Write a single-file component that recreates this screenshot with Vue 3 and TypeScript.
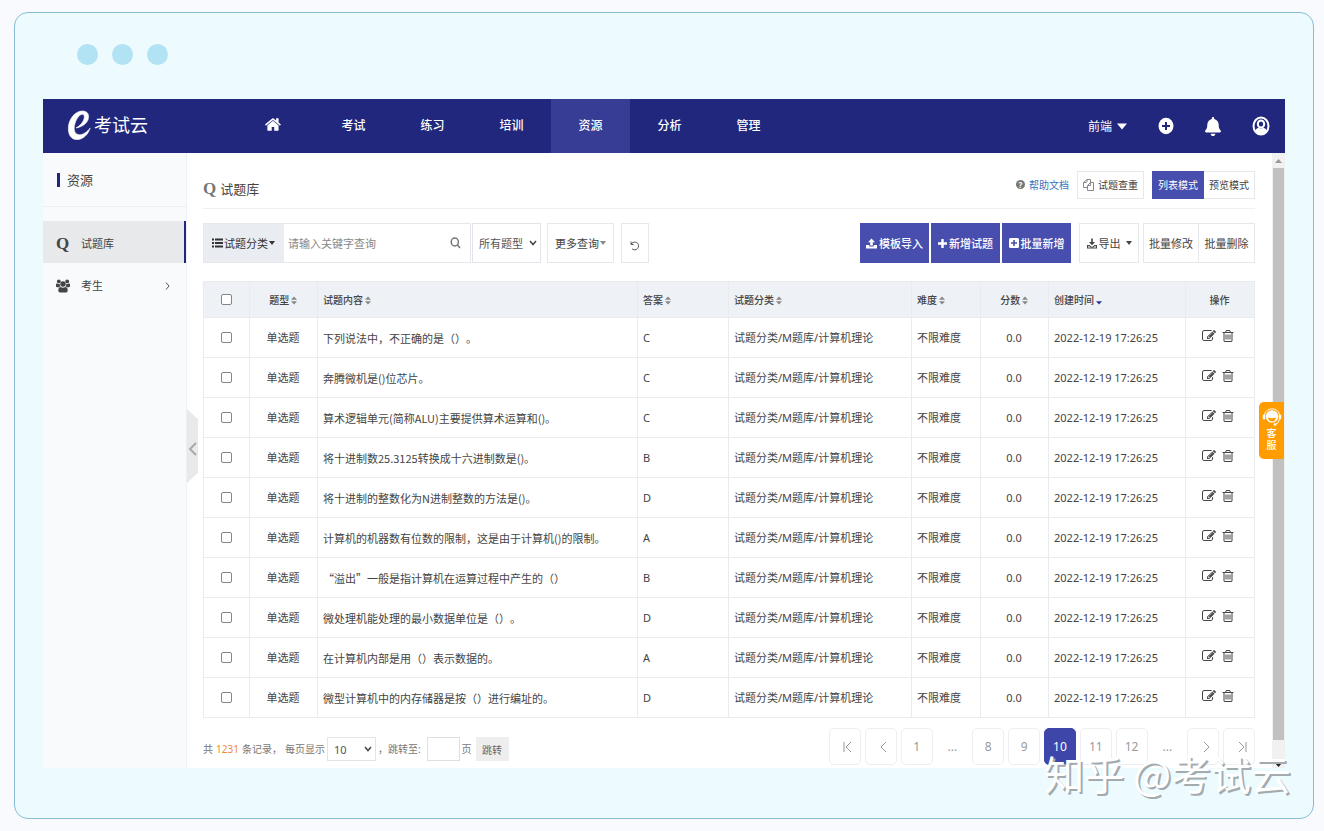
<script setup lang="ts">
import { ref } from 'vue'

interface Question {
  id: number
  text: string
  answer: string
}

interface Column {
  label: string
  cls: string
  sort: 'both' | 'desc' | 'none'
}

const navItems: string[] = ['考试', '练习', '培训', '资源', '分析', '管理']
const activeNav = ref('资源')

const columns: Column[] = [
  { label: '题型', cls: 'center', sort: 'both' },
  { label: '试题内容', cls: '', sort: 'both' },
  { label: '答案', cls: '', sort: 'both' },
  { label: '试题分类', cls: '', sort: 'both' },
  { label: '难度', cls: '', sort: 'both' },
  { label: '分数', cls: 'center', sort: 'both' },
  { label: '创建时间', cls: '', sort: 'desc' },
  { label: '操作', cls: 'center', sort: 'none' },
]

const questions: Question[] = [
  { id: 1, text: '下列说法中，不正确的是（）。', answer: 'C' },
  { id: 2, text: '奔腾微机是()位芯片。', answer: 'C' },
  { id: 3, text: '算术逻辑单元(简称ALU)主要提供算术运算和()。', answer: 'C' },
  { id: 4, text: '将十进制数25.3125转换成十六进制数是()。', answer: 'B' },
  { id: 5, text: '将十进制的整数化为N进制整数的方法是()。', answer: 'D' },
  { id: 6, text: '计算机的机器数有位数的限制，这是由于计算机()的限制。', answer: 'A' },
  { id: 7, text: '“溢出”一般是指计算机在运算过程中产生的（）', answer: 'B' },
  { id: 8, text: '微处理机能处理的最小数据单位是（）。', answer: 'D' },
  { id: 9, text: '在计算机内部是用（）表示数据的。', answer: 'A' },
  { id: 10, text: '微型计算机中的内存储器是按（）进行编址的。', answer: 'D' },
]

const pages: string[] = ['first', 'prev', '1', '...', '8', '9', '10', '11', '12', '...', 'next', 'last']
const arrows: Record<string, { d: string; label: string }> = {
  first: { d: 'M2 1v10M9 1L4 6l5 5', label: '首页' },
  prev: { d: 'M8 1L3 6l5 5', label: '上一页' },
  next: { d: 'M4 1l5 5-5 5', label: '下一页' },
  last: { d: 'M10 1v10M3 1l5 5-5 5', label: '末页' },
}
const currentPage = ref('10')
const keyword = ref('')
const jumpTo = ref('')
</script>

<template>
  <div class="frame">
    <div class="dots"><i></i><i></i><i></i></div>

    <div class="app">
      <header class="topbar">
        <a class="logo" href="#">
          <svg class="logo-mark" viewBox="0 0 24 32" aria-hidden="true">
            <path
              d="M9 18.500C14 18 20 14.500 21.500 9.500C23 4.500 20.500 1 15.500 1C8 1 1 9.500 1 19C1 26.500 4.500 30.500 10 30.500C16 30.500 21.500 25.500 23.500 18.500C20.500 22.500 16.500 25.500 12.500 25.500C8.500 25.500 6.500 22 7.200 17C8.200 10.500 12 4.500 15.500 4.500C18.500 4.500 18 10 14.500 14C12.800 16 11 17.500 9 18.500Z"
            />
          </svg>
          <span>考试云</span>
        </a>
        <nav class="nav">
          <a href="#" aria-label="首页">
            <svg class="home" viewBox="80 200 1640 1290" aria-hidden="true">
              <path d="M1472 992v480q0 26-19 45t-45 19h-384v-384h-256v384h-384q-26 0-45-19t-19-45v-480q0-1 .5-3t.5-3l575-474 575 474q1 2 1 6zm223-69l-62 74q-8 9-21 11h-3q-13 0-21-7l-692-577-692 577q-12 8-24 7-13-2-21-11l-62-74q-8-10-7-23.500t11-21.500l719-599q32-26 76-26t76 26l244 204v-195q0-14 9-23t23-9h192q14 0 23 9t9 23v408l219 182q10 8 11 21.500t-7 23.500z" />
            </svg>
          </a>
          <a v-for="n in navItems" :key="n" href="#" :class="{ active: n === activeNav }" @click.prevent="activeNav = n">{{ n }}</a>
        </nav>
        <div class="top-actions">
          <button class="switcher" type="button">
            前端
            <svg width="10" height="7" viewBox="0 0 10 7" aria-hidden="true"><path d="M0 0.500h10L5 6.500z" /></svg>
          </button>
          <button type="button" aria-label="新增">
            <svg width="16" height="18" viewBox="0 0 16 18" aria-hidden="true">
              <ellipse cx="8" cy="9" rx="7.500" ry="8.300" />
              <path class="cut" d="M8 5v8M4 9h8" />
            </svg>
          </button>
          <button type="button" aria-label="消息">
            <svg width="16" height="19" viewBox="0 0 448 512" preserveAspectRatio="none" aria-hidden="true">
              <path d="M224 512c35.320 0 63.970-28.650 63.970-64H160.030c0 35.350 28.650 64 63.970 64zm215.390-149.710c-19.320-20.760-55.470-51.990-55.470-154.290 0-77.700-54.480-139.900-127.940-155.160V32c0-17.670-14.320-32-31.980-32s-31.980 14.330-31.980 32v20.840C118.560 68.100 64.080 130.300 64.080 208c0 102.300-36.150 133.530-55.470 154.290-6 6.450-8.660 14.160-8.610 21.710.11 16.400 12.980 32 32.100 32h383.800c19.120 0 32-15.600 32.100-32 .05-7.550-2.610-15.270-8.610-21.710z" />
            </svg>
          </button>
          <button type="button" aria-label="个人中心">
            <svg width="18" height="20" viewBox="0 0 18 20" aria-hidden="true">
              <ellipse class="ring" cx="9" cy="10" rx="7.500" ry="8.500" />
              <ellipse class="ring" cx="9" cy="8" rx="3.200" ry="3.600" />
              <path d="M3 15C4 13 5 12.300 6.500 11.800C8 12.800 10 12.800 11.500 11.800C13 12.300 14 13 15 15C13 17.800 11 18.800 9 18.800S5 17.800 3 15z" />
            </svg>
          </button>
        </div>
      </header>

      <div class="body">
        <aside class="sidebar">
          <h2>资源</h2>
          <a class="side-item active" href="#"><b class="q">Q</b><span>试题库</span></a>
          <a class="side-item" href="#">
            <svg class="users" viewBox="0 0 14 14" aria-hidden="true">
              <circle cx="2.800" cy="2.400" r="1.900" />
              <circle cx="11.200" cy="2.400" r="1.900" />
              <circle cx="7" cy="5" r="2.700" />
              <path d="M0 5.500Q0 4.200 1.200 4.500Q2.500 5.300 3.700 4.700Q3.500 6.500 4.500 7.500Q3.500 7.600 2.800 8.300H1.200Q0 8.300 0 7.200zM14 5.500Q14 4.200 12.800 4.500Q11.500 5.300 10.300 4.700Q10.500 6.500 9.500 7.500Q10.500 7.600 11.200 8.300H12.800Q14 8.300 14 7.200z" />
              <path d="M2.300 11.500Q2.300 8 4.600 8Q7 9.500 9.400 8Q11.700 8 11.700 11.500Q11.700 13.600 10 13.600H4Q2.300 13.600 2.300 11.500z" />
            </svg>
            <span>考生</span>
            <svg class="chev" width="5" height="8" viewBox="0 0 5 8" aria-hidden="true"><path d="M1 0.500L4 4L1 7.500" /></svg>
          </a>
        </aside>

        <main class="main">
          <button class="collapse" type="button" aria-label="收起菜单">
            <svg width="8" height="14" viewBox="0 0 8 14" aria-hidden="true"><path d="M7 1L1 7l6 6" /></svg>
          </button>

          <div class="page-head">
            <h1><b class="q">Q</b>试题库</h1>
            <div class="head-tools">
              <a class="help" href="#"><i>?</i>帮助文档</a>
              <button class="btn small check" type="button">
                <svg width="11" height="12" viewBox="0 0 11 12" aria-hidden="true">
                  <path d="M4 3V0.500H7.500V4M4 0.500L0.500 3.500V8.500H4M0.500 3.500H3.500M7.500 3.500H10.500V11.500H4.500V6.500L7.500 3.500V6.500H4.500" />
                </svg>
                试题查重
              </button>
              <div class="group">
                <button class="btn small primary" type="button">列表模式</button>
                <button class="btn small" type="button">预览模式</button>
              </div>
            </div>
          </div>

          <div class="toolbar">
            <div class="search">
              <button class="category" type="button">
                <svg width="11" height="10" viewBox="0 0 11 10" aria-hidden="true">
                  <path d="M0 0.500h2v2H0zM3 0.500h8v2H3zM0 4h2v2H0zM3 4h8v2H3zM0 7.500h2v2H0zM3 7.500h8v2H3z" />
                </svg>
                <span>试题分类</span>
                <svg width="6" height="4" viewBox="0 0 6 4" aria-hidden="true"><path d="M0 0h6L3 4z" /></svg>
              </button>
              <input v-model="keyword" type="text" placeholder="请输入关键字查询" aria-label="关键字" />
              <button class="find" type="button" aria-label="查询">
                <svg width="11" height="12" viewBox="0 0 11 12" aria-hidden="true">
                  <ellipse cx="4.800" cy="5" rx="3.600" ry="4" /><path d="M7.500 8L10 11" />
                </svg>
              </button>
            </div>
            <div class="select type-select">
              <select aria-label="题型"><option>所有题型</option></select>
              <svg width="8" height="6" viewBox="0 0 8 6" aria-hidden="true"><path d="M1 1l3 3.500L7 1" /></svg>
            </div>
            <button class="btn more" type="button">
              更多查询<svg width="6" height="4" viewBox="0 0 6 4" aria-hidden="true"><path d="M0 0h6L3 4z" /></svg>
            </button>
            <button class="btn reset" type="button" aria-label="重置">
              <svg width="10" height="11" viewBox="0 0 10 11" aria-hidden="true">
                <path d="M1 1.500V4.500H3.500M1.200 4C3 1.200 8.500 1.300 8.500 5.800C8.500 10 4 10.800 2.200 8.800" />
              </svg>
            </button>

            <div class="tool-right">
              <button class="btn primary" type="button">
                <svg width="11" height="11" viewBox="0 0 11 11" aria-hidden="true">
                  <path d="M5.500 0.500L9 4.200H6.800V7.500H4.200V4.200H2zM0 7H3.300V8.500H7.700V7H11V10.500H0z" />
                </svg>模板导入
              </button>
              <button class="btn primary" type="button">
                <svg width="9" height="9" viewBox="0 0 9 9" aria-hidden="true"><path d="M3.300 0h2.400v3.300H9v2.400H5.700V9H3.300V5.700H0V3.300h3.300z" /></svg>新增试题
              </button>
              <button class="btn primary" type="button">
                <svg width="10" height="10" viewBox="0 0 10 10" aria-hidden="true">
                  <path fill-rule="evenodd" d="M1.500 0h7Q10 0 10 1.500v7Q10 10 8.500 10h-7Q0 10 0 8.500v-7Q0 0 1.500 0zM4.200 2v2.200H2v1.600h2.200V8h1.600V5.800H8V4.200H5.800V2z" />
                </svg>批量新增
              </button>
              <button class="btn export" type="button">
                <svg width="10" height="11" viewBox="0 0 10 11" aria-hidden="true">
                  <path fill-rule="evenodd" d="M4.200 0.500H5.800V4H8L5 7.200L2 4H4.200zM0 7H2.500L5 9L7.500 7H10V10.500H0zM1 8.200V9.500H9V8.200H7.800L5 10L2.200 8.200z" />
                </svg>导出<svg class="caret" width="6" height="4" viewBox="0 0 6 4" aria-hidden="true"><path d="M0 0h6L3 4z" /></svg>
              </button>
              <div class="group">
                <button class="btn" type="button">批量修改</button>
                <button class="btn" type="button">批量删除</button>
              </div>
            </div>
          </div>

          <table>
            <colgroup>
              <col class="c-check" /><col class="c-type" /><col /><col class="c-answer" /><col class="c-cat" />
              <col class="c-level" /><col class="c-score" /><col class="c-time" /><col class="c-ops" />
            </colgroup>
            <thead>
              <tr>
                <th class="center"><input type="checkbox" aria-label="全选" /></th>
                <th v-for="c in columns" :key="c.label" :class="c.cls">
                  {{ c.label }}
                  <svg v-if="c.sort === 'both'" width="6" height="9" viewBox="0 0 6 9" aria-hidden="true"><path d="M0 3.800h6L3 0.500zM0 5.200h6L3 8.500z" /></svg>
                  <svg v-if="c.sort === 'desc'" class="desc" width="6" height="9" viewBox="0 0 6 9" aria-hidden="true"><path d="M0 5.200h6L3 8.500z" /></svg>
                </th>
              </tr>
            </thead>
            <tbody>
              <tr v-for="q in questions" :key="q.id">
                <td class="center"><input type="checkbox" :aria-label="'选择第' + q.id + '题'" /></td>
                <td class="center">单选题</td>
                <td class="content">{{ q.text }}</td>
                <td>{{ q.answer }}</td>
                <td>试题分类/M题库/计算机理论</td>
                <td>不限难度</td>
                <td class="center">0.0</td>
                <td>2022-12-19 17:26:25</td>
                <td>
                  <div class="ops">
                    <button type="button" aria-label="编辑">
                      <svg width="14" height="14" viewBox="0 0 1792 1792" aria-hidden="true">
                        <path d="M888 1184l116-116-152-152-116 116v56h96v96h56zm440-720q-16-16-33 1l-350 350q-17 17-1 33t33-1l350-350q17-17 1-33zm80 594v190q0 119-84.500 203.500t-203.500 84.500h-832q-119 0-203.500-84.500t-84.500-203.500v-832q0-119 84.500-203.500t203.500-84.500h832q63 0 117 25 15 7 18 23 3 17-9 29l-49 49q-14 14-32 8-23-6-45-6h-832q-66 0-113 47t-47 113v832q0 66 47 113t113 47h832q66 0 113-47t47-113v-126q0-13 9-22l64-64q15-15 35-7t20 29zm-96-738l288 288-672 672h-288v-288zm444 132l-92 92-288-288 92-92q28-28 68-28t68 28l152 152q28 28 28 68t-28 68z" />
                      </svg>
                    </button>
                    <button type="button" aria-label="删除">
                      <svg width="14" height="14" viewBox="0 0 1792 1792" aria-hidden="true">
                        <path d="M704 736v576q0 14-9 23t-23 9h-64q-14 0-23-9t-9-23v-576q0-14 9-23t23-9h64q14 0 23 9t9 23zm256 0v576q0 14-9 23t-23 9h-64q-14 0-23-9t-9-23v-576q0-14 9-23t23-9h64q14 0 23 9t9 23zm256 0v576q0 14-9 23t-23 9h-64q-14 0-23-9t-9-23v-576q0-14 9-23t23-9h64q14 0 23 9t9 23zm128 724v-948h-896v948q0 22 7 40.500t14.500 27 10.500 8.500h832q3 0 10.500-8.500t14.500-27 7-40.500zm-672-1076h448l-48-117q-7-9-17-11h-317q-10 2-17 11zm928 32v64q0 14-9 23t-23 9h-96v948q0 83-47 143.500t-113 60.500h-832q-66 0-113-58.500t-47-141.500v-952h-96q-14 0-23-9t-9-23v-64q0-14 9-23t23-9h309l70-167q15-37 54-63t79-26h320q40 0 79 26t54 63l70 167h309q14 0 23 9t9 23z" />
                      </svg>
                    </button>
                  </div>
                </td>
              </tr>
            </tbody>
          </table>

          <footer class="footer">
            <div class="summary">
              <span>共</span><em>1231</em><span>条记录，</span>
              <label class="per" for="page-size">每页显示</label>
              <div class="select size-select">
                <select id="page-size"><option>10</option></select>
                <svg width="8" height="6" viewBox="0 0 8 6" aria-hidden="true"><path d="M1 1l3 3.500L7 1" /></svg>
              </div>
              <label class="jump" for="jump">，跳转至:</label>
              <input id="jump" v-model="jumpTo" type="text" />
              <span>页</span>
              <button class="go" type="button">跳转</button>
            </div>
            <nav class="pager" aria-label="分页">
              <template v-for="(p, i) in pages" :key="i">
                <span v-if="p === '...'">...</span>
                <button v-else-if="arrows[p]" type="button" class="arrow" :aria-label="arrows[p].label">
                  <svg width="12" height="12" viewBox="0 0 12 12" aria-hidden="true"><path :d="arrows[p].d" /></svg>
                </button>
                <button v-else type="button" :class="{ current: p === currentPage }" @click="currentPage = p">{{ p }}</button>
              </template>
            </nav>
          </footer>
        </main>

        <div class="scrollbar" aria-hidden="true">
          <svg width="7" height="4" viewBox="0 0 7 4"><path d="M0 4h7L3.500 0z" /></svg>
          <div class="thumb"></div>
          <svg class="down" width="7" height="4" viewBox="0 0 7 4"><path d="M0 0h7L3.500 4z" /></svg>
        </div>

        <button class="service" type="button">
          <svg width="20" height="20" viewBox="0 0 20 20" aria-hidden="true">
            <path class="band" d="M2.500 9C2.500 -0.500 17.500 -0.500 17.500 9" />
            <rect x="0.800" y="7.500" width="2.400" height="5" rx="1" />
            <rect x="16.800" y="7.500" width="2.400" height="5" rx="1" />
            <circle cx="10" cy="9.500" r="6.200" />
            <path class="band" d="M17.500 12Q17 16 13.500 17.500" />
            <circle cx="13" cy="17.500" r="1.300" />
            <path class="smile" d="M6 10.500Q10 12 14 10.500Q13.500 14.500 10 14.500Q6.500 14.500 6 10.500z" />
          </svg>
          <span>客</span><span>服</span>
        </button>
      </div>
    </div>

    <div class="watermark">知乎 @考试云</div>
  </div>
</template>

<style>
body {
  margin: 0;
  background: #f8fafd;
}
</style>

<style scoped>
.frame,
.frame button,
.frame input,
.frame select {
  font-family: 'Noto Sans', 'Noto Sans CJK SC', sans-serif;
}
.frame * {
  box-sizing: border-box;
}
.frame {
  position: relative;
  margin: 12px 10px 11px 14px;
  padding: 0 28px 50px;
  border: 1px solid #86bdd3;
  border-radius: 14px;
  background: #edfbff;
  color: #444;
  font-size: 11px;
  line-height: 16px;
}
button {
  padding: 0;
  border: 0;
  background: none;
  color: inherit;
  cursor: pointer;
  white-space: nowrap;
}
a {
  color: inherit;
  text-decoration: none;
}
svg {
  display: block;
  flex: none;
  fill: currentColor;
}
.dots {
  display: flex;
  gap: 14px;
  height: 86px;
  padding: 31px 0 0 34px;
}
.dots i {
  width: 21px;
  height: 21px;
  border-radius: 50%;
  background: #b1e3f4;
}

/* top bar */
.topbar {
  display: flex;
  height: 54px;
  background: #20277c;
  color: #fff;
}
.logo {
  display: flex;
  align-items: center;
  gap: 3px;
  width: 192px;
  padding: 0 0 2px 24px;
  font-size: 18px;
  line-height: 24px;
}
.logo-mark {
  width: 24px;
  height: 31px;
  overflow: visible;
  stroke: #fff;
  stroke-width: 0.600;
}
.nav {
  display: flex;
  flex: 1;
}
.nav a {
  display: flex;
  align-items: center;
  justify-content: center;
  width: 79px;
  font-size: 12px;
  font-weight: 500;
}
.nav a.active {
  background: #373c95;
}
.home {
  width: 16px;
  height: 14px;
  margin: 0 3px 4px 0;
  overflow: visible;
}
.top-actions {
  display: flex;
  align-items: center;
  gap: 31px;
  padding-right: 15px;
}
.switcher {
  display: flex;
  align-items: center;
  gap: 5px;
  font-size: 12px;
}
.cut {
  fill: none;
  stroke: #20277c;
  stroke-width: 2;
}
.ring {
  fill: none;
  stroke: #fff;
  stroke-width: 2;
}

/* body */
.body {
  position: relative;
  display: flex;
  background: #fff;
}
.sidebar {
  width: 144px;
  border-right: 1px solid #eef0f4;
  background: #f9fafc;
}
.sidebar h2 {
  display: flex;
  align-items: center;
  gap: 7px;
  height: 54px;
  margin: 0 0 14px;
  padding-left: 14px;
  border-bottom: 1px solid #eceef2;
  font-size: 13px;
  font-weight: 400;
}
.sidebar h2::before {
  content: '';
  width: 3px;
  height: 14px;
  background: #20277c;
}
.side-item {
  display: flex;
  align-items: center;
  height: 42px;
  padding: 4px 16px 0 13px;
}
.side-item.active {
  border-right: 2px solid #20277c;
  background: #e8e9eb;
}
.side-item span {
  flex: 1;
}
.q {
  font-family: 'Liberation Serif', serif;
  font-size: 17px;
}
.side-item .q {
  width: 25px;
}
.users {
  width: 14px;
  height: 14px;
  margin-right: 11px;
}
.chev {
  fill: none;
  stroke: #555;
}
.main {
  position: relative;
  flex: 1;
  min-width: 0;
  padding: 0 17px 0 16px;
}
.collapse {
  position: absolute;
  left: 0;
  top: 256px;
  display: flex;
  align-items: center;
  justify-content: center;
  width: 11px;
  height: 74px;
  padding-top: 6px;
  background: #e9e9e9;
  clip-path: polygon(0 0, 100% 14%, 100% 86%, 0 100%);
}
.collapse svg {
  fill: none;
  stroke: #aaa;
  stroke-width: 2;
}
.page-head {
  display: flex;
  align-items: center;
  justify-content: space-between;
  height: 56px;
  padding-top: 8px;
  border-bottom: 1px solid #eef0f3;
}
h1 {
  display: flex;
  align-items: center;
  gap: 4px;
  margin: 8px 0 0;
  font-size: 13px;
  font-weight: 400;
}
h1 .q {
  color: #777;
}
.head-tools,
.group,
.tool-right,
.summary {
  display: flex;
  align-items: center;
}
.head-tools {
  gap: 8px;
}
.help {
  display: flex;
  align-items: center;
  gap: 4px;
  color: #3a70bd;
  font-size: 10px;
}
.help i {
  width: 9px;
  height: 9px;
  border-radius: 50%;
  background: #777;
  color: #fff;
  font-size: 8px;
  font-style: normal;
  font-weight: 700;
  line-height: 9px;
  text-align: center;
}
.btn {
  display: flex;
  align-items: center;
  justify-content: center;
  height: 40px;
  padding: 0 5px;
  border: 1px solid #e6e8ec;
  background: #fff;
  font-size: 11px;
}
.btn.small {
  height: 28px;
  font-size: 10px;
}
.btn.primary {
  border-color: #474eae;
  background: #474eae;
  color: #fff;
}
.check {
  gap: 4px;
}
.check svg {
  fill: none;
  stroke: #888;
}
.group .btn + .btn {
  border-left: 0;
}
.toolbar {
  display: flex;
  margin: 14px 0 18px;
}
.search {
  display: flex;
  width: 268px;
  height: 40px;
  border: 1px solid #e6e8ec;
}
.category {
  display: flex;
  align-items: center;
  gap: 1px;
  width: 80px;
  padding-left: 8px;
  background: #e9edf2;
  color: #333;
  font-size: 11px;
}
.search input {
  flex: 1;
  min-width: 0;
  padding: 0 4px;
  border: 0;
  outline: 0;
  font-size: 11px;
}
.search input::placeholder {
  color: #888;
}
.find {
  width: 20px;
}
.find svg {
  fill: none;
  stroke: #777;
  stroke-width: 1.500;
}
.select {
  position: relative;
  display: flex;
  align-items: center;
}
.select select {
  appearance: none;
  width: 100%;
  height: 100%;
  border: 1px solid #e1e4e8;
  border-radius: 0;
  background: #fff;
  color: #555;
}
.select svg {
  position: absolute;
  right: 4px;
  fill: none;
  stroke: #444;
  stroke-width: 1.500;
  pointer-events: none;
}
.type-select {
  width: 69px;
  height: 40px;
  margin: 0 6px 0 1px;
}
.type-select select {
  padding: 0 6px;
  font-size: 11px;
}
.more {
  width: 67px;
  margin-right: 7px;
}
.more svg {
  margin-left: 1px;
  fill: #888;
}
.reset {
  width: 28px;
  padding-top: 4px;
}
.reset svg {
  fill: none;
  stroke: #555;
}
.tool-right {
  gap: 2px;
  margin-left: auto;
}
.tool-right .primary {
  gap: 2px;
  width: 69px;
  font-weight: 500;
}
.export {
  gap: 2px;
  width: 60px;
  margin: 0 2px 0 6px;
}
.export .caret {
  margin-left: 3px;
}
.tool-right .group .btn {
  width: 56px;
}

/* table */
table {
  width: 100%;
  border-collapse: collapse;
  table-layout: fixed;
}
.c-check {
  width: 46px;
}
.c-type {
  width: 68px;
}
.c-answer {
  width: 91px;
}
.c-cat {
  width: 183px;
}
.c-level,
.c-ops {
  width: 69px;
}
.c-score {
  width: 68px;
}
.c-time {
  width: 137px;
}
th,
td {
  height: 40px;
  padding: 0 6px 0 5px;
  border: 1px solid #e9ebee;
  text-align: left;
  white-space: nowrap;
}
th {
  height: 36px;
  background: #eef1f5;
  font-size: 10px;
  font-weight: 500;
}
th svg {
  display: inline-block;
  margin-left: -1px;
  vertical-align: -1px;
  fill: #888;
}
th .desc {
  fill: #20359c;
}
.center {
  text-align: center;
}
td.content {
  font-family: 'Noto Sans CJK SC', sans-serif;
  text-spacing-trim: space-all;
}
input[type='checkbox'] {
  appearance: none;
  display: block;
  width: 11px;
  height: 11px;
  margin: 0 auto;
  border: 1px solid #858585;
  border-radius: 2px;
  background: #fff;
}
.ops {
  display: flex;
  justify-content: center;
  gap: 5px;
  padding: 0 2px 4px 0;
}

/* footer */
.footer {
  display: flex;
  align-items: flex-start;
  justify-content: space-between;
  padding: 10px 0 3px;
  color: #777;
}
.summary {
  gap: 2px;
  padding-top: 9px;
  font-size: 10px;
}
.summary em {
  margin: 0 1px;
  color: #ee8a35;
  font-style: normal;
}
.per {
  margin-left: 1px;
}
.size-select {
  width: 49px;
  height: 24px;
}
.size-select select {
  padding: 0 6px;
  font-size: 11px;
}
.jump {
  margin-right: 4px;
}
.summary input {
  width: 33px;
  height: 24px;
  border: 1px solid #dddfe2;
}
.go {
  width: 33px;
  height: 24px;
  margin-left: 2px;
  background: #eee;
  color: #666;
  font-size: 10px;
}
.pager {
  display: grid;
  grid-template-columns: repeat(12, 1fr);
  gap: 4px;
  width: 426px;
}
.pager button,
.pager span {
  display: flex;
  align-items: center;
  justify-content: center;
  height: 37px;
  border: 1px solid transparent;
  color: #999;
  font-size: 12px;
}
.pager button {
  border-color: #eceef1;
  border-radius: 5px;
}
.pager .current {
  border-color: #3f46a9;
  background: #3f46a9;
  color: #fff;
}
.pager .arrow {
  padding-left: 6px;
}
.arrow svg {
  fill: none;
  stroke: #999;
}

.scrollbar {
  display: flex;
  flex-direction: column;
  align-items: center;
  width: 13px;
  padding: 6px 1px 1px;
  background: #f1f1f1;
  color: #999;
}
.scrollbar .thumb {
  flex: 1;
  width: 11px;
  margin: 5px 0 23px;
  background: #c1c1c1;
}
.scrollbar .down {
  color: #222;
}
.service {
  position: absolute;
  right: 1px;
  top: 249px;
  display: flex;
  flex-direction: column;
  align-items: center;
  width: 25px;
  height: 57px;
  padding-top: 5px;
  border-radius: 5px 0 0 5px;
  background: #ff9c00;
  color: #fff;
  font-size: 10px;
  font-weight: 500;
  line-height: 12px;
}
.band {
  fill: none;
  stroke: #fff;
}
.smile {
  fill: #ff9c00;
}
.watermark {
  position: absolute;
  right: 22px;
  bottom: 15px;
  color: #fff;
  font-family: 'Noto Sans CJK SC', sans-serif;
  font-size: 40px;
  line-height: 60px;
  text-shadow: 2px 2px 0 #a3abaf;
  pointer-events: none;
  white-space: nowrap;
}
</style>
